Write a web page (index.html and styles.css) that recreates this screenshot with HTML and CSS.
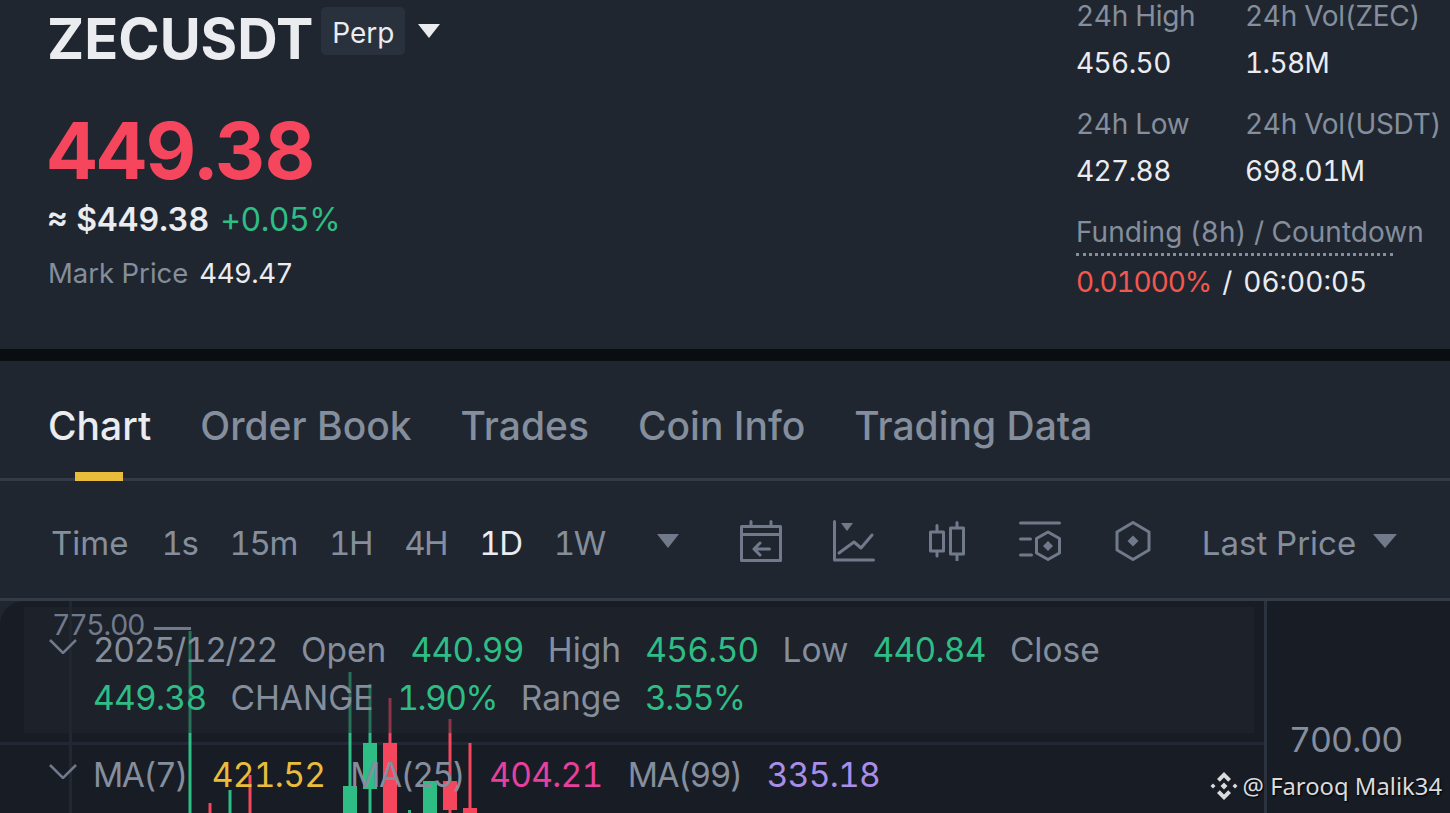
FILE: index.html
```html
<!DOCTYPE html>
<html lang="en">
<head>
  <meta charset="UTF-8">
  <meta name="viewport" content="width=device-width, initial-scale=1.0">
  <title>ZECUSDT Perp</title>
  <link rel="stylesheet" href="styles.css">
</head>
<body>
  <header class="ticker">
    <div class="ticker-left">
      <div class="symbol-row">
        <h1 class="symbol">ZECUSDT</h1>
        <span class="perp-tag">Perp</span>
        <span class="caret caret-white"></span>
      </div>
      <div class="last-price">449.38</div>
      <div class="fiat-row"><span class="fiat">≈ $449.38</span><span class="pct">+0.05%</span></div>
      <div class="mark-row"><span class="muted">Mark Price</span><span class="mark-value">449.47</span></div>
    </div>
    <div class="ticker-right">
      <div class="stat-grid">
        <div class="stat"><span class="muted">24h High</span><span class="stat-value">456.50</span></div>
        <div class="stat"><span class="muted">24h Vol(ZEC)</span><span class="stat-value">1.58M</span></div>
        <div class="stat"><span class="muted">24h Low</span><span class="stat-value">427.88</span></div>
        <div class="stat"><span class="muted">24h Vol(USDT)</span><span class="stat-value">698.01M</span></div>
      </div>
      <div class="funding">
        <span class="muted funding-label">Funding (8h) / Countdown</span>
        <div class="funding-value"><span class="funding-rate">0.01000%</span><span class="funding-sep">/</span><span>06:00:05</span></div>
      </div>
    </div>
  </header>

  <nav class="tabs">
    <a class="tab tab-active">Chart</a>
    <a class="tab">Order Book</a>
    <a class="tab">Trades</a>
    <a class="tab">Coin Info</a>
    <a class="tab">Trading Data</a>
  </nav>

  <div class="toolbar">
    <span class="tf">Time</span>
    <span class="tf tf-num">1s</span>
    <span class="tf tf-num">15m</span>
    <span class="tf tf-num">1H</span>
    <span class="tf tf-num">4H</span>
    <span class="tf tf-num tf-active">1D</span>
    <span class="tf tf-num">1W</span>
    <span class="caret caret-grey caret-tf"></span>
    <svg class="tool-icon icon-calendar" viewBox="0 0 42 42" fill="none" stroke="#707a8a" stroke-width="3" stroke-linecap="round" stroke-linejoin="round">
      <path d="M1.500 6.500h39v34h-39z"/><path d="M1.500 14.500h39M11 1.500v5M31 1.500v5M29.500 29H14M20 23l-6 6 6 6"/>
    </svg>
    <svg class="tool-icon icon-line" viewBox="0 0 42 42" fill="none" stroke="#707a8a" stroke-width="3" stroke-linecap="round" stroke-linejoin="round">
      <path d="M1.500 1.500v38.500h39"/><path d="M6 33l15-11 7 6 11-13"/><path d="M8 3h12l-6 8z" fill="#707a8a" stroke="none"/>
    </svg>
    <svg class="tool-icon icon-candle" viewBox="0 0 36 40" fill="none" stroke="#707a8a" stroke-width="3" stroke-linecap="round" stroke-linejoin="round">
      <path d="M1.500 11h13v19h-13zM21.500 7h13v26h-13zM8 4.500V11M8 30v5M28 1.500V7M28 33v6"/>
    </svg>
    <svg class="tool-icon icon-indicator" viewBox="0 0 42 40" fill="none" stroke="#707a8a" stroke-width="3" stroke-linecap="round" stroke-linejoin="round">
      <path d="M1.500 2h39M1.500 18h10M1.500 34h11"/><path d="M29 11l11.500 6.500V32L29 38.500 17.500 32V17.500z"/><path d="M29 20l5 5-5 5-5-5z" fill="#707a8a" stroke="none"/>
    </svg>
    <svg class="tool-icon icon-settings" viewBox="0 0 36 40" fill="none" stroke="#707a8a" stroke-width="3" stroke-linecap="round" stroke-linejoin="round">
      <path d="M18 1.500l16 9.500v18l-16 9.500L2 29V11z"/><path d="M18 14.500l5.500 5.500-5.500 5.500-5.500-5.500z" fill="#707a8a" stroke="none"/>
    </svg>
    <span class="tf last-price-select">Last Price</span>
    <span class="caret caret-grey caret-last"></span>
  </div>

  <section class="chart">
    <div class="plot">
      <div class="grid-h"></div>
      <div class="grid-v"></div>
      <svg class="candles" viewBox="0 0 1264 212" width="1264" height="212">
        <g stroke="#2ebd85" stroke-width="3">
          <path d="M190 30V212M230 189V212M350 71V190M370 83V212"/>
        </g>
        <g stroke="#f6465d" stroke-width="3">
          <path d="M210 202V212M250 174V212M390 97V150M450 118V212M470 142V212"/>
        </g>
        <g fill="#2ebd85">
          <rect x="343" y="185" width="14" height="27"/>
          <rect x="363" y="142" width="14" height="46"/>
          <rect x="423" y="180" width="14" height="32"/>
          <rect x="408" y="209" width="3" height="3"/>
        </g>
        <g fill="#f6465d">
          <rect x="383" y="142" width="14" height="70"/>
          <rect x="443" y="180" width="14" height="29"/>
          <rect x="463" y="207" width="14" height="5"/>
        </g>
      </svg>
      <div class="legend-box"></div>
      <div class="axis-tick">775.00</div>
      <div class="axis-dash"></div>
      <div class="legend">
        <div class="legend-row">
          <svg class="chevron" viewBox="0 0 28 16" fill="none" stroke="#707a8a" stroke-width="2.500"><path d="M1 2l13 13L27 2"/></svg>
          <div class="legend-lines">
            <div class="legend-text">
              <span class="legend-date">2025/12/22</span><span>Open</span><span class="up">440.99</span><span>High</span><span class="up">456.50</span><span>Low</span><span class="up">440.84</span><span>Close</span>
            </div>
            <div class="legend-text">
              <span class="up">449.38</span><span>CHANGE</span><span class="up up-pct">1.90%</span><span>Range</span><span class="up up-pct">3.55%</span>
            </div>
          </div>
        </div>
        <div class="legend-row legend-ma">
          <svg class="chevron" viewBox="0 0 28 16" fill="none" stroke="#707a8a" stroke-width="2.500"><path d="M1 2l13 13L27 2"/></svg>
          <div class="legend-text">
            <span class="ma-label">MA(7)</span><span class="ma7">421.52</span><span class="ma-label">MA(25)</span><span class="ma25">404.21</span><span class="ma-label">MA(99)</span><span class="ma99">335.18</span>
          </div>
        </div>
      </div>
    </div>
    <div class="price-axis"><span class="axis-label">700.00</span></div>
    <div class="watermark">
      <svg class="logo" viewBox="0 0 28 28" fill="#d9dbdc">
        <path d="M14 0l7 7-2.800 2.800L14 5.600 9.800 9.800 7 7zM14 28l-7-7 2.800-2.800 4.200 4.200 4.200-4.200L21 21zM3 11.500L5.500 14 3 16.500.500 14zM25 11.500l2.500 2.500-2.500 2.500-2.500-2.500zM14 10.500l3.500 3.500-3.500 3.500-3.500-3.500z"/>
      </svg>
      <span>@ Farooq Malik34</span>
    </div>
  </section>
</body>
</html>
```

FILE: styles.css
```css
* {
  box-sizing: border-box;
}
html, body {
  height: 813px;
  overflow: hidden;
}
body {
  margin: 0;
  background: #202630;
  color: #eaecef;
  font-family: Inter, Lato, sans-serif;
  font-variant-numeric: tabular-nums;
}
.muted {
  color: #848e9c;
}

/* ticker */
.ticker {
  height: 349px;
  display: flex;
  justify-content: space-between;
  padding: 0 10px 0 48px;
}
.symbol-row {
  display: flex;
  align-items: flex-start;
  height: 83px;
}
.symbol {
  margin: 10px 0 0 -1px;
  font-size: 56px;
  line-height: 58px;
  font-weight: 700;
}
.perp-tag {
  margin: 7px 0 0 8px;
  width: 84px;
  height: 48px;
  line-height: 52px;
  text-align: center;
  font-size: 28px;
  background: #29313d;
  border-radius: 5px;
}
.caret {
  display: block;
  flex: none;
  width: 0;
  height: 0;
  border-left: 11px solid transparent;
  border-right: 11px solid transparent;
  border-top: 14px solid #eaecef;
}
.caret-white {
  margin: 24px 0 0 13px;
}
.caret-grey {
  border-top-color: #707a8a;
}
.last-price {
  font-size: 78px;
  line-height: 90px;
  font-weight: 700;
  letter-spacing: -1px;
  color: #f6465d;
  margin: 23px 0 0 -1px;
  height: 94px;
}
.fiat-row {
  display: flex;
  gap: 11px;
  margin-left: -1px;
  font-size: 32px;
  line-height: 40px;
}
.fiat {
  font-weight: 600;
}
.pct {
  color: #2ebd85;
  letter-spacing: -.5px;
}
.mark-row {
  display: flex;
  gap: 11px;
  font-size: 27.500px;
  line-height: 34px;
  margin-top: 16px;
}
.mark-value {
  letter-spacing: -.5px;
}
.ticker-right {
  width: 364px;
  font-size: 28px;
}
.stat-grid {
  display: grid;
  grid-template-columns: 169px 1fr;
  margin-top: -2px;
}
.stat {
  display: flex;
  flex-direction: column;
  height: 108px;
  line-height: 36px;
  white-space: nowrap;
  letter-spacing: -.3px;
}
.stat-value {
  letter-spacing: -.6px;
  margin-top: 11px;
}
.funding {
  margin-top: -1px;
}
.funding-label {
  display: inline-block;
  line-height: 38px;
  padding-bottom: 2px;
  border-bottom: 3px dotted #848e9c;
  width: 317px;
  white-space: nowrap;
}
.funding-value {
  display: flex;
  line-height: 36px;
  margin-top: 8px;
  font-size: 28px;
}
.funding-rate {
  color: #f4574e;
  letter-spacing: -1.100px;
}
.funding-sep {
  margin: 0 11px;
}

/* tabs */
.tabs {
  height: 132px;
  border-top: 12px solid #0b0e11;
  border-bottom: 3px solid #333b47;
  display: flex;
  gap: 49px;
  padding-left: 48px;
}
.tab {
  position: relative;
  padding-top: 42px;
  font-size: 39px;
  line-height: 46px;
  font-weight: 500;
  color: #848e9c;
}
.tab-active {
  color: #eaecef;
}
.tab-active::after {
  content: "";
  position: absolute;
  left: 27px;
  bottom: -3px;
  width: 48px;
  height: 9px;
  background: #e9bc3b;
}

/* toolbar */
.toolbar {
  height: 120px;
  display: flex;
  align-items: center;
  border-bottom: 3px solid #333b47;
  padding-left: 51px;
  font-size: 33px;
}
.tf {
  color: #848e9c;
  margin-right: 33px;
  padding-top: 6px;
}
.tf-num {
  letter-spacing: -1.400px;
  margin-right: 32px;
}
.tf-active {
  color: #eaecef;
}
.caret-tf {
  margin-left: 20px;
  margin-top: 2px;
}
.caret-last {
  margin-top: 2px;
  border-left-width: 12px;
  border-right-width: 12px;
}
.tool-icon {
  flex: none;
  height: 42px;
  width: 42px;
  margin-top: 2px;
}
.icon-calendar {
  margin-left: 61px;
}
.icon-line {
  margin-left: 51px;
}
.icon-candle {
  margin-left: 54px;
  width: 36px;
  height: 40px;
}
.icon-indicator {
  margin-left: 54px;
  height: 40px;
}
.icon-settings {
  margin-left: 54px;
  width: 36px;
  height: 40px;
}
.last-price-select {
  margin-left: 51px;
  margin-right: 17px;
}

/* chart */
.chart {
  position: relative;
  display: flex;
  height: 212px;
  background: #181c25;
  border-top-left-radius: 24px;
  overflow: hidden;
}
.plot {
  position: relative;
  flex: none;
  width: 1267px;
  height: 100%;
  border-right: 3px solid #2b3240;
}
.candles {
  position: absolute;
  left: 0;
  top: 0;
}
.legend-box {
  position: absolute;
  left: 24px;
  top: 6px;
  width: 1230px;
  height: 126px;
  background: rgba(32, 38, 48, .5);
}
.grid-h {
  position: absolute;
  left: 0;
  right: 0;
  top: 141px;
  height: 3px;
  background: #222833;
}
.grid-v {
  position: absolute;
  left: 69px;
  top: 0;
  bottom: 0;
  width: 3px;
  background: #222833;
}
.axis-tick {
  position: absolute;
  left: 52px;
  top: 5px;
  font-size: 28.500px;
  letter-spacing: -1.300px;
  line-height: 38px;
  color: #707a8a;
}
.axis-dash {
  position: absolute;
  left: 154px;
  top: 26px;
  width: 37px;
  height: 3px;
  background: #707a8a;
}
.legend {
  position: absolute;
  left: 49px;
  top: 25px;
  width: 1200px;
  font-size: 33.500px;
  line-height: 48px;
  color: #848e9c;
}
.legend-row {
  display: flex;
  align-items: flex-start;
}
.legend-ma {
  margin-top: 29px;
}
.legend-ma .legend-text {
  column-gap: 25px;
}
.chevron {
  flex: none;
  width: 28px;
  height: 16px;
  margin-top: 12px;
  margin-right: 16px;
}
.legend-text {
  display: flex;
  column-gap: 24px;
}
.legend-date {
  letter-spacing: -1.400px;
}
.ma-label {
  letter-spacing: -1.500px;
}
.up,
.ma7,
.ma25,
.ma99 {
  letter-spacing: -.7px;
}
.up {
  color: #2ebd85;
}
.up-pct {
  letter-spacing: -1.500px;
}
.ma7 {
  color: #e9bc3b;
}
.ma25 {
  color: #e6409f;
}
.ma99 {
  color: #a98ee8;
}
.price-axis {
  flex: 1;
  position: relative;
}
.axis-label {
  position: absolute;
  left: 22px;
  top: 117px;
  font-size: 34px;
  letter-spacing: -1px;
  line-height: 44px;
  color: #848e9c;
}
.watermark {
  position: absolute;
  right: 8px;
  bottom: 11px;
  display: flex;
  align-items: center;
  gap: 5px;
  font-family: "Noto Sans", sans-serif;
  font-size: 23.800px;
  line-height: 32px;
  color: #d9dbdc;
  text-shadow: 1px 1px 2px #000;
}
.logo {
  width: 28px;
  height: 28px;
}
```
